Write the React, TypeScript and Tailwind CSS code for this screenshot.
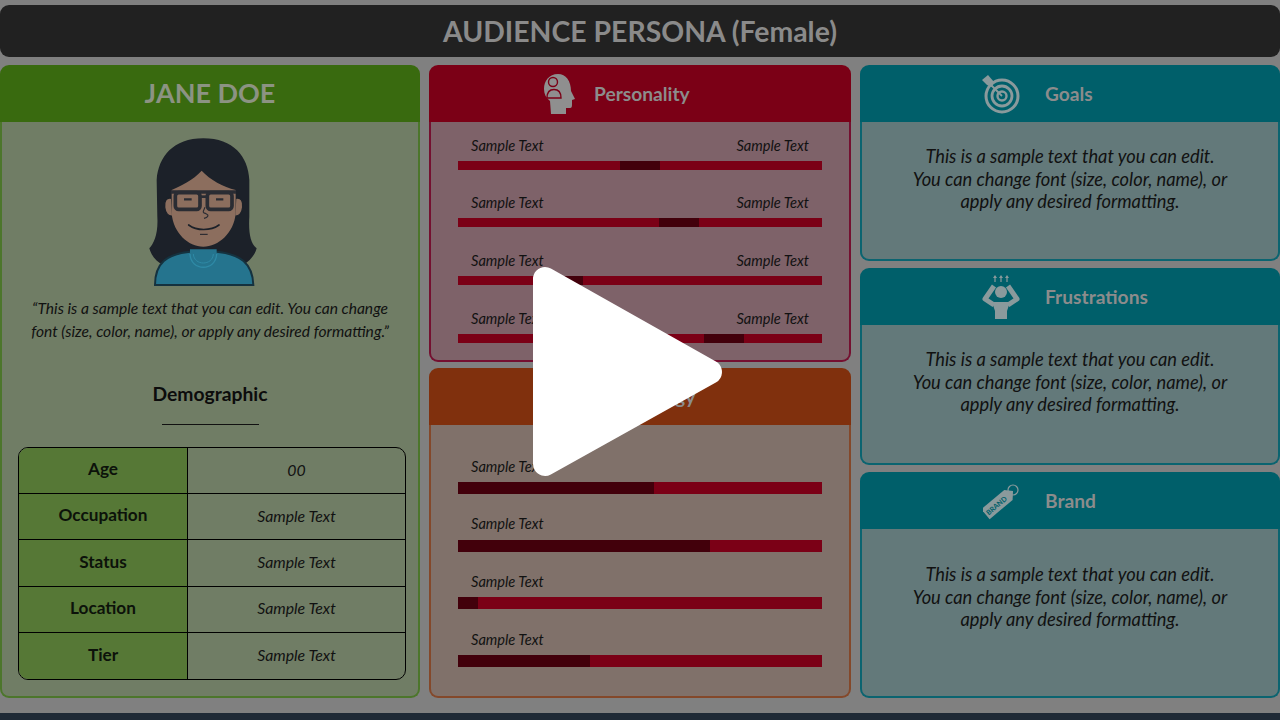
import React from 'react';

const headText = 'text-[#8c8c8c]';

function Avatar() {
  return (
    <svg viewBox="0 0 450 480" className="w-[150px] h-[160px] shrink-0 ml-[128px] mt-[8px]">
      <path d="M220 25C130 25 85 80 80 150L82 260C85 310 72 340 58 355C65 380 80 395 100 405L340 405C360 392 375 375 380 355C362 340 355 310 358 260L358 150C355 80 310 25 220 25Z" fill="#1c2129" />
      <path d="M125 205C108 200 102 215 104 232C106 250 115 260 128 258Z" fill="#8c6e5e" stroke="#1c2129" strokeWidth="4" />
      <path d="M317 205C334 200 340 215 338 232C336 250 327 260 314 258Z" fill="#8c6e5e" stroke="#1c2129" strokeWidth="4" />
      <path d="M215 122C190 150 150 168 125 180L125 250C130 310 175 350 220 350C265 350 312 310 317 250L317 180C280 170 240 150 215 122Z" fill="#8c6e5e" />
      <path d="M75 465C75 400 110 372 180 365L260 365C330 372 368 400 370 465Z" fill="#25748e" stroke="#15323f" strokeWidth="6" />
      <path d="M180 358L260 358L260 385C250 418 190 418 180 385Z" fill="#25748e" />
      <path d="M180 372C182 425 258 425 260 372" fill="none" stroke="#2f8aa6" strokeWidth="4" />
      <path d="M190 372C192 408 248 408 250 372" fill="none" stroke="#2f8aa6" strokeWidth="3" />
      <path d="M122 186L318 186" stroke="#2a2c33" strokeWidth="10" />
      <rect x="136" y="188" width="74" height="50" rx="10" fill="none" stroke="#2a2c33" strokeWidth="11" />
      <rect x="232" y="188" width="74" height="50" rx="10" fill="none" stroke="#2a2c33" strokeWidth="11" />
      <path d="M210 200L232 200" stroke="#2a2c33" strokeWidth="8" />
      <path d="M162 208L185 208M258 208L280 208" stroke="#2a2c33" strokeWidth="7" />
      <path d="M225 232C220 244 215 248 228 251C238 255 234 263 222 265" fill="none" stroke="#2a2c33" strokeWidth="3.5" />
      <path d="M176 285C200 303 242 303 267 285" fill="none" stroke="#1c2129" strokeWidth="5" strokeLinecap="round" />
      <path d="M210 313L233 313" stroke="#1c2129" strokeWidth="3" />
    </svg>
  );
}

function HeadIcon() {
  return (
    <svg viewBox="0 0 34 42" className="w-[34px] h-[42px]">
      <path d="M16 1C7 1 2 8 2 16C2 21 4 25 8 28L9 41L24 41L24 35L28 35C30 35 30 33 30 31L30 27L33 26L29 18C29 8 24 1 16 1Z" fill="#8f8f8f" />
      <circle cx="11" cy="9" r="4.5" fill="#8f8f8f" stroke="#7b0016" strokeWidth="1.4" />
      <path d="M5 25C5 19 8 16.5 12 16.5C16 16.5 19 19 19 25Z" fill="#8f8f8f" stroke="#7b0016" strokeWidth="1.4" />
    </svg>
  );
}

function TargetIcon() {
  return (
    <svg viewBox="0 0 40 40" className="w-[40px] h-[40px]" fill="none" stroke="#8a9a9c">
      <circle cx="21" cy="22" r="16" strokeWidth="3" />
      <circle cx="21" cy="22" r="10" strokeWidth="2.8" />
      <circle cx="21" cy="22" r="4.5" strokeWidth="2.4" />
      <path d="M21 22L9 10" strokeWidth="1.8" />
      <path d="M1 6L7 1L13 8L11 13L6 11Z" fill="#8a9a9c" stroke="none" />
    </svg>
  );
}

function StressIcon() {
  return (
    <svg viewBox="0 0 40 46" className="w-[40px] h-[46px]" fill="#8a9a9c">
      <path d="M12 4L14 1L16 4L14.6 4L14.6 8L13.4 8L13.4 4ZM18 4L20 1L22 4L20.6 4L20.6 8L19.4 8L19.4 4ZM24 4L26 1L28 4L26.6 4L26.6 8L25.4 8L25.4 4Z" />
      <circle cx="20" cy="18" r="6" />
      <path d="M13 12L4 25L13 31" fill="none" stroke="#8a9a9c" strokeWidth="5" strokeLinejoin="round" />
      <path d="M27 12L36 25L27 31" fill="none" stroke="#8a9a9c" strokeWidth="5" strokeLinejoin="round" />
      <path d="M11 28L29 28L26 37L26 45L14 45L14 37Z" />
    </svg>
  );
}

function TagIcon() {
  return (
    <svg viewBox="0 0 36 38" className="w-[36px] h-[38px]">
      <g transform="rotate(-40 17 20)">
        <path d="M-2 13.5L28 13.5L34 20L28 26.5L-2 26.5Z" fill="#8a9a9c" />
        <text x="12" y="23" textAnchor="middle" fontSize="7" fontWeight="700" fill="#005f6a" fontFamily="Lato, sans-serif">BRAND</text>
      </g>
      <circle cx="30" cy="8" r="5" fill="none" stroke="#8a9a9c" strokeWidth="1.2" />
    </svg>
  );
}

function Card({ title, header, body, border, h, pad, gap, icon, children }: {
  title: string; header: string; body: string; border: string; h: string; pad: string; gap: string; icon?: React.ReactNode; children: React.ReactNode;
}) {
  return (
    <section className={`flex flex-col ${h}`}>
      <header className={`h-[57px] shrink-0 rounded-t-[9px] flex items-center ${header} ${pad}`}>
        <div className="w-[40px] flex justify-center">{icon}</div>
        <h2 className={`pt-[2px] text-[19.2px] font-bold ${gap} ${headText}`}>{title}</h2>
      </header>
      <div className={`flex-1 border-2 border-t-0 rounded-b-[9px] ${body} ${border}`}>{children}</div>
    </section>
  );
}

function Slider({ left, right, from, size, tall }: { left: string; right?: string; from: number; size: number; tall?: boolean }) {
  return (
    <div>
      <div className="flex justify-between px-[13px] pt-[1.5px] h-[18px] items-center text-[14.6px] italic leading-[18px] text-[#111]">
        <span>{left}</span>
        {right && <span>{right}</span>}
      </div>
      <div className={`mt-[7px] bg-[#7b0016] relative ${tall ? 'h-[12px]' : 'h-[9px]'}`}>
        <div className="absolute top-0 h-full bg-[#42000b]" style={{ left: from, width: size }} />
      </div>
    </div>
  );
}

function Blurb({ pt }: { pt: string }) {
  return (
    <p className={`text-center italic text-[18.3px] leading-[22.5px] text-[#111] ${pt}`}>
      This is a sample text that you can edit.<br />
      You can change font (size, color, name), or<br />
      apply any desired formatting.
    </p>
  );
}

const demographics = [
  ['Age', '00'],
  ['Occupation', 'Sample Text'],
  ['Status', 'Sample Text'],
  ['Location', 'Sample Text'],
  ['Tier', 'Sample Text'],
];

const personality = [
  { from: 162, size: 40 },
  { from: 201, size: 40 },
  { from: 85, size: 40 },
  { from: 246, size: 40 },
];

const fills = [196, 252, 20, 132];

export default function App() {
  return (
    <div className="relative w-[1280px] h-[720px] overflow-hidden bg-[#808080] font-['Lato',sans-serif] flex flex-col pt-[5px]">
      <div className="h-[52px] shrink-0 rounded-[9px] bg-[#212121] flex items-center justify-center">
        <h1 className="text-[28.4px] font-bold text-[#8a8a8a]">AUDIENCE PERSONA (Female)</h1>
      </div>

      <div className="mt-[8px] h-[633px] shrink-0 flex gap-[9px]">
        <section className="w-[420px] flex flex-col">
          <header className="h-[57px] shrink-0 rounded-t-[9px] bg-[#396a0f] flex items-center justify-center">
            <h2 className="text-[27px] font-bold text-[#8c9383]">JANE DOE</h2>
          </header>
          <div className="flex-1 flex flex-col border-2 border-t-0 border-[#4c762b] rounded-b-[9px] bg-[#707d65]">
            <Avatar />
            <p className="mt-[7px] text-center italic text-[15.6px] leading-[23px] text-[#111]">
              “This is a sample text that you can edit. You can change<br />
              font (size, color, name), or apply any desired formatting.”
            </p>
            <h3 className="mt-[39px] text-center text-[19.3px] leading-[24px] font-bold text-[#0c0c0c]">Demographic</h3>
            <div className="mt-[18px] mx-auto w-[97px] h-px bg-[#111]" />
            <div className="mt-[22px] ml-[16px] mr-[12px] border border-black rounded-[10px] overflow-hidden grid grid-cols-[169px_1fr] h-[233px] grid-rows-5">
              {demographics.map(([k, v], i) => (
                <React.Fragment key={k}>
                  <div className={`bg-[#567836] border-r border-black flex items-center justify-center text-[17.2px] font-bold text-[#0c120a] pb-[3px] ${i < 4 ? 'border-b' : ''}`}>{k}</div>
                  <div className={`border-black flex items-center justify-center text-[15.8px] italic text-[#111] pb-[2px] ${i < 4 ? 'border-b' : ''}`}>{v}</div>
                </React.Fragment>
              ))}
            </div>
          </div>
        </section>

        <div className="w-[422px] flex flex-col gap-[6px]">
          <Card title="Personality" header="bg-[#7b0016]" body="bg-[#7e6269]" border="border-[#741030]" h="h-[297px]" pad="pl-[110px]" gap="ml-[15px]" icon={<HeadIcon />}>
            <div className="px-[27px] pt-[13.8px] flex flex-col gap-[23.67px]">
              {personality.map((p, i) => (
                <Slider key={i} left="Sample Text" right="Sample Text" from={p.from} size={p.size} />
              ))}
            </div>
          </Card>
          <Card title="Technology" header="bg-[#80300d]" body="bg-[#80716a]" border="border-[#84482a]" h="h-[330px]" pad="pl-[110px]" gap="ml-[19px]">
            <div className="px-[27px] pt-[32px] flex flex-col gap-[20.7px]">
              {fills.map((f, i) => (
                <Slider key={i} left="Sample Text" from={0} size={f} tall />
              ))}
            </div>
          </Card>
        </div>

        <div className="flex-1 flex flex-col gap-[7px]">
          <Card title="Goals" header="bg-[#005f6a]" body="bg-[#63797a]" border="border-[#0b6470]" h="h-[196px]" pad="pl-[121px]" gap="ml-[24px]" icon={<TargetIcon />}>
            <Blurb pt="pt-[23px]" />
          </Card>
          <Card title="Frustrations" header="bg-[#005f6a]" body="bg-[#63797a]" border="border-[#0b6470]" h="h-[197px]" pad="pl-[121px]" gap="ml-[24px]" icon={<StressIcon />}>
            <Blurb pt="pt-[23px]" />
          </Card>
          <Card title="Brand" header="bg-[#005f6a]" body="bg-[#63797a]" border="border-[#0b6470]" h="h-[226px]" pad="pl-[121px]" gap="ml-[24px]" icon={<TagIcon />}>
            <Blurb pt="pt-[34px]" />
          </Card>
        </div>
      </div>

      <div className="mt-[15px] flex-1 bg-[#1f2a36]" />

      {/* play button overlay */}
      <svg viewBox="0 0 1280 720" className="absolute inset-0 w-[1280px] h-[720px] pointer-events-none">
        <path d="M545 279L710 372L545 464Z" fill="#ffffff" stroke="#ffffff" strokeWidth="24" strokeLinejoin="round" />
      </svg>
    </div>
  );
}
